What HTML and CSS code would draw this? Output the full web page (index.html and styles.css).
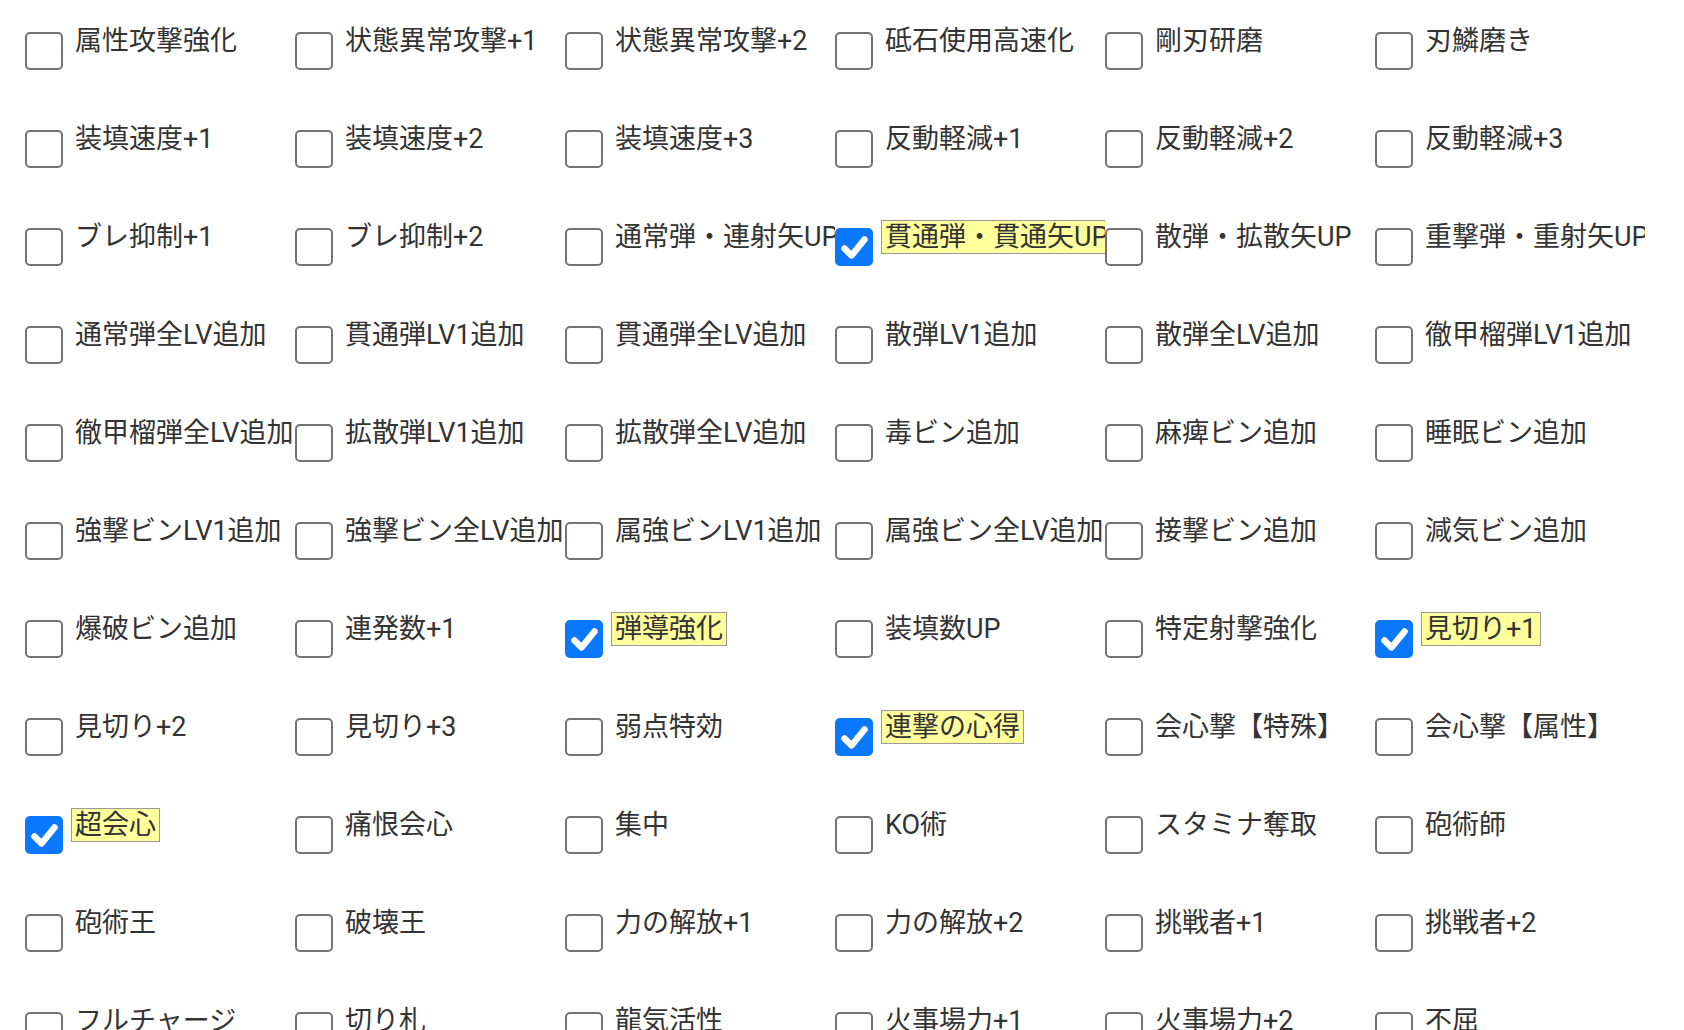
FILE: index.html
```html
<!DOCTYPE html>
<html lang="ja">
<head>
<meta charset="utf-8">
<title>スキル</title>
<link rel="stylesheet" href="styles.css">
</head>
<body>

<!-- スキル一覧 -->
<div class="skills">
	<label class="skill"><input type="checkbox"><i class="box"></i><span>属性攻撃強化</span></label>
	<label class="skill"><input type="checkbox"><i class="box"></i><span>状態異常攻撃+1</span></label>
	<label class="skill"><input type="checkbox"><i class="box"></i><span>状態異常攻撃+2</span></label>
	<label class="skill"><input type="checkbox"><i class="box"></i><span>砥石使用高速化</span></label>
	<label class="skill"><input type="checkbox"><i class="box"></i><span>剛刃研磨</span></label>
	<label class="skill"><input type="checkbox"><i class="box"></i><span>刃鱗磨き</span></label>

	<label class="skill"><input type="checkbox"><i class="box"></i><span>装填速度+1</span></label>
	<label class="skill"><input type="checkbox"><i class="box"></i><span>装填速度+2</span></label>
	<label class="skill"><input type="checkbox"><i class="box"></i><span>装填速度+3</span></label>
	<label class="skill"><input type="checkbox"><i class="box"></i><span>反動軽減+1</span></label>
	<label class="skill"><input type="checkbox"><i class="box"></i><span>反動軽減+2</span></label>
	<label class="skill"><input type="checkbox"><i class="box"></i><span>反動軽減+3</span></label>

	<label class="skill"><input type="checkbox"><i class="box"></i><span>ブレ抑制+1</span></label>
	<label class="skill"><input type="checkbox"><i class="box"></i><span>ブレ抑制+2</span></label>
	<label class="skill"><input type="checkbox"><i class="box"></i><span>通常弾・連射矢UP</span></label>
	<label class="skill"><input type="checkbox" checked><i class="box"><svg viewBox="0 0 38 38"><path d="M9.5 20.5L16.5 27.5L29.5 11.5"/></svg></i><span>貫通弾・貫通矢UP</span></label>
	<label class="skill"><input type="checkbox"><i class="box"></i><span>散弾・拡散矢UP</span></label>
	<label class="skill"><input type="checkbox"><i class="box"></i><span>重撃弾・重射矢UP</span></label>

	<label class="skill"><input type="checkbox"><i class="box"></i><span>通常弾全LV追加</span></label>
	<label class="skill"><input type="checkbox"><i class="box"></i><span>貫通弾LV1追加</span></label>
	<label class="skill"><input type="checkbox"><i class="box"></i><span>貫通弾全LV追加</span></label>
	<label class="skill"><input type="checkbox"><i class="box"></i><span>散弾LV1追加</span></label>
	<label class="skill"><input type="checkbox"><i class="box"></i><span>散弾全LV追加</span></label>
	<label class="skill"><input type="checkbox"><i class="box"></i><span>徹甲榴弾LV1追加</span></label>

	<label class="skill"><input type="checkbox"><i class="box"></i><span>徹甲榴弾全LV追加</span></label>
	<label class="skill"><input type="checkbox"><i class="box"></i><span>拡散弾LV1追加</span></label>
	<label class="skill"><input type="checkbox"><i class="box"></i><span>拡散弾全LV追加</span></label>
	<label class="skill"><input type="checkbox"><i class="box"></i><span>毒ビン追加</span></label>
	<label class="skill"><input type="checkbox"><i class="box"></i><span>麻痺ビン追加</span></label>
	<label class="skill"><input type="checkbox"><i class="box"></i><span>睡眠ビン追加</span></label>

	<label class="skill"><input type="checkbox"><i class="box"></i><span>強撃ビンLV1追加</span></label>
	<label class="skill"><input type="checkbox"><i class="box"></i><span>強撃ビン全LV追加</span></label>
	<label class="skill"><input type="checkbox"><i class="box"></i><span>属強ビンLV1追加</span></label>
	<label class="skill"><input type="checkbox"><i class="box"></i><span>属強ビン全LV追加</span></label>
	<label class="skill"><input type="checkbox"><i class="box"></i><span>接撃ビン追加</span></label>
	<label class="skill"><input type="checkbox"><i class="box"></i><span>減気ビン追加</span></label>

	<label class="skill"><input type="checkbox"><i class="box"></i><span>爆破ビン追加</span></label>
	<label class="skill"><input type="checkbox"><i class="box"></i><span>連発数+1</span></label>
	<label class="skill"><input type="checkbox" checked><i class="box"><svg viewBox="0 0 38 38"><path d="M9.5 20.5L16.5 27.5L29.5 11.5"/></svg></i><span>弾導強化</span></label>
	<label class="skill"><input type="checkbox"><i class="box"></i><span>装填数UP</span></label>
	<label class="skill"><input type="checkbox"><i class="box"></i><span>特定射撃強化</span></label>
	<label class="skill"><input type="checkbox" checked><i class="box"><svg viewBox="0 0 38 38"><path d="M9.5 20.5L16.5 27.5L29.5 11.5"/></svg></i><span>見切り+1</span></label>

	<label class="skill"><input type="checkbox"><i class="box"></i><span>見切り+2</span></label>
	<label class="skill"><input type="checkbox"><i class="box"></i><span>見切り+3</span></label>
	<label class="skill"><input type="checkbox"><i class="box"></i><span>弱点特効</span></label>
	<label class="skill"><input type="checkbox" checked><i class="box"><svg viewBox="0 0 38 38"><path d="M9.5 20.5L16.5 27.5L29.5 11.5"/></svg></i><span>連撃の心得</span></label>
	<label class="skill"><input type="checkbox"><i class="box"></i><span>会心撃【特殊】</span></label>
	<label class="skill"><input type="checkbox"><i class="box"></i><span>会心撃【属性】</span></label>

	<label class="skill"><input type="checkbox" checked><i class="box"><svg viewBox="0 0 38 38"><path d="M9.5 20.5L16.5 27.5L29.5 11.5"/></svg></i><span>超会心</span></label>
	<label class="skill"><input type="checkbox"><i class="box"></i><span>痛恨会心</span></label>
	<label class="skill"><input type="checkbox"><i class="box"></i><span>集中</span></label>
	<label class="skill"><input type="checkbox"><i class="box"></i><span>KO術</span></label>
	<label class="skill"><input type="checkbox"><i class="box"></i><span>スタミナ奪取</span></label>
	<label class="skill"><input type="checkbox"><i class="box"></i><span>砲術師</span></label>

	<label class="skill"><input type="checkbox"><i class="box"></i><span>砲術王</span></label>
	<label class="skill"><input type="checkbox"><i class="box"></i><span>破壊王</span></label>
	<label class="skill"><input type="checkbox"><i class="box"></i><span>力の解放+1</span></label>
	<label class="skill"><input type="checkbox"><i class="box"></i><span>力の解放+2</span></label>
	<label class="skill"><input type="checkbox"><i class="box"></i><span>挑戦者+1</span></label>
	<label class="skill"><input type="checkbox"><i class="box"></i><span>挑戦者+2</span></label>

	<label class="skill"><input type="checkbox"><i class="box"></i><span>フルチャージ</span></label>
	<label class="skill"><input type="checkbox"><i class="box"></i><span>切り札</span></label>
	<label class="skill"><input type="checkbox"><i class="box"></i><span>龍気活性</span></label>
	<label class="skill"><input type="checkbox"><i class="box"></i><span>火事場力+1</span></label>
	<label class="skill"><input type="checkbox"><i class="box"></i><span>火事場力+2</span></label>
	<label class="skill"><input type="checkbox"><i class="box"></i><span>不屈</span></label>
</div>

</body>
</html>
```

FILE: styles.css
```css
body {
  margin: 0;
  background: #fff;
  color: #333;
  font-family: Roboto, "Noto Sans CJK JP", sans-serif;
}

.skills {
  display: grid;
  grid-template-columns: repeat(6, 270px);
  grid-auto-rows: 98px;
  padding: 24px 0 0 25px;
}

.skill {
  display: flex;
  align-items: flex-start;
  overflow: hidden;
  white-space: nowrap;
  font-size: 27px;
  line-height: 32px;
}
.skill input {
  display: none;
}

/* チェックボックス */
.box {
  flex-shrink: 0;
  box-sizing: border-box;
  width: 38px;
  height: 38px;
  margin-top: 8px;
  border: 2px solid #737373;
  border-radius: 5px;
  background: #fff;
}
.box svg {
  display: block;
  width: 38px;
  height: 38px;
  fill: none;
  stroke: #fff;
  stroke-width: 6.5;
  stroke-linecap: round;
  stroke-linejoin: round;
}
.skill input:checked + .box {
  border: none;
  background: #0a77ff;
}

.skill span {
  margin-left: 8px;
  padding: 0 3px;
  border: 1px solid transparent;
}
.skill input:checked ~ span {
  background: #ffff9c;
  border-color: #999;
}
```
